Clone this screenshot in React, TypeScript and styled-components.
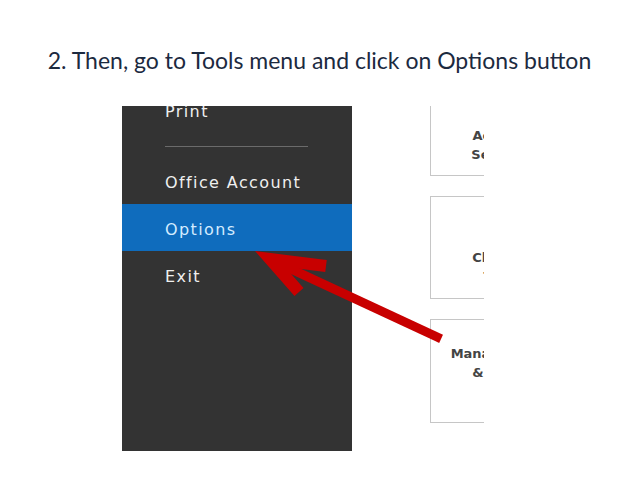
import React from 'react';
import styled, {createGlobalStyle} from "styled-components";

const GlobalStyle = createGlobalStyle`
  html, body {
    margin: 0;
    padding: 0;
    background: #ffffff;
  }
`;

const Slide = styled.div`
  width: 638px;
  height: 479px;
  overflow: hidden;
  background: #fff;
  display: flex;
  flex-direction: column;
  align-items: center;
`;

const Title = styled.h1`
  margin: 46px 0 0 1px;
  font-family: "Lato", "Liberation Sans", sans-serif;
  font-weight: 400;
  font-size: 23px;
  line-height: 28px;
  color: #1c2a3f;
  white-space: nowrap;
`;

const Shot = styled.div`
  position: relative;
  align-self: flex-start;
  margin: 32px 0 0 122px;
  width: 362px;
  height: 346px;
  display: flex;
`;

const Backstage = styled.div`
  width: 230px;
  height: 345px;
  background: #333333;
  overflow: hidden;
  display: flex;
  flex-direction: column;
  font-family: "DejaVu Sans", "Open Sans", sans-serif;
`;

const MenuItem = styled.div<{ $active?: boolean; $offset?: number }>`
  height: 47px;
  box-sizing: border-box;
  flex-shrink: 0;
  display: flex;
  align-items: center;
  padding: 3px 0 0 43px;
  margin-top: ${p => p.$offset ?? 0}px;
  font-size: 16px;
  letter-spacing: 1.4px;
  color: ${p => p.$active ? '#d3ebff' : '#efefef'};
  background: ${p => p.$active ? '#0f6cbd' : 'transparent'};
`;

const Separator = styled.div`
  height: 1px;
  width: 143px;
  margin: 13px 0 10px 43px;
  background: #6b6b6b;
  flex-shrink: 0;
`;

const Cards = styled.div`
  margin-left: 78px;
  width: 54px;
  overflow: hidden;
  display: flex;
  flex-direction: column;
  gap: 20px;
`;

const Card = styled.div<{ $height: number; $pad: number; $cut?: boolean }>`
  width: 144px;
  height: ${p => p.$height}px;
  box-sizing: border-box;
  border: 1px solid #c6c6c6;
  border-top-width: ${p => p.$cut ? 0 : 1}px;
  display: flex;
  flex-direction: column;
  justify-content: flex-end;
  align-items: center;
  padding-bottom: ${p => p.$pad}px;
  font-family: "DejaVu Sans", "Open Sans", sans-serif;
  font-size: 13px;
  font-weight: 600;
  line-height: 19px;
  color: #444;
  text-align: center;
  white-space: nowrap;
`;

const Arrow = styled.svg`
  position: absolute;
  left: 0;
  top: 0;
  pointer-events: none;
`;

export default function App() {
    return (
        <>
            <GlobalStyle/>
            <Slide>
                <Title>2. Then, go to Tools menu and click on Options button</Title>
                <Shot>
                    <Backstage>
                        <MenuItem $offset={-20}>Print</MenuItem>
                        <Separator/>
                        <MenuItem>Office Account</MenuItem>
                        <MenuItem $active>Options</MenuItem>
                        <MenuItem>Exit</MenuItem>
                    </Backstage>
                    <Cards>
                        <Card $height={70} $pad={11} $cut>
                            <span>Account</span>
                            <span>Settings</span>
                        </Card>
                        <Card $height={103} $pad={12}>
                            <span>Cleanup</span>
                            <span>Tools</span>
                        </Card>
                        <Card $height={104} $pad={40}>
                            <span>Manage Rules</span>
                            <span>&amp; Alerts</span>
                        </Card>
                    </Cards>
                    <Arrow width={362} height={346} viewBox="122 106 362 346">
                        <line x1="437" y1="337" x2="278" y2="263" stroke="#c80000" strokeWidth="9" strokeLinecap="square"/>
                        <polyline points="326,266 270,259 299,292" fill="none" stroke="#c80000" strokeWidth="12" strokeLinejoin="miter"/>
                    </Arrow>
                </Shot>
            </Slide>
        </>
    );
}
